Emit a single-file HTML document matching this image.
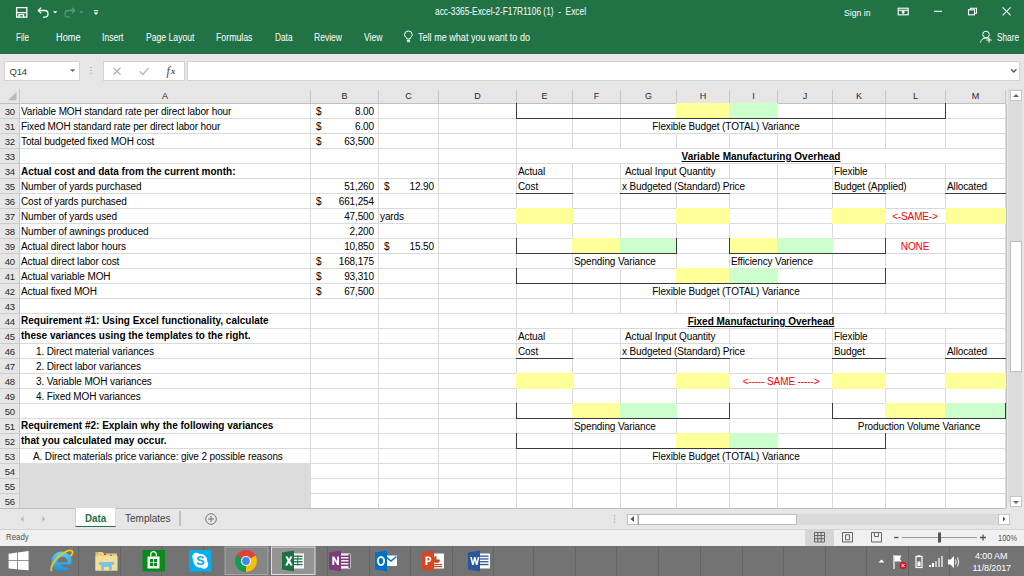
<!DOCTYPE html><html><head><meta charset="utf-8"><style>
*{margin:0;padding:0;box-sizing:border-box}
html,body{width:1024px;height:576px;overflow:hidden;background:#fff;font-family:"Liberation Sans",sans-serif}
.a{position:absolute}
.t{position:absolute;white-space:pre;font-size:10px;line-height:15px;color:#000;letter-spacing:-0.12px}
.b{font-weight:bold;letter-spacing:0px}
.u{text-decoration:underline}
.r{color:#f00}
.ui{position:absolute;white-space:pre;font-size:9px;line-height:12px;color:#fff;letter-spacing:-0.1px}
svg{position:absolute;overflow:visible}
</style></head><body>
<div class="a" style="left:0;top:0;width:1024px;height:54px;background:#217346"></div>
<svg style="left:0;top:0" width="110" height="25" viewBox="0 0 110 25">
<g fill="none" stroke="#fff" stroke-width="1.3">
<path d="M16.6 7.6h10.2v9.6h-10.2z"/>
<path d="M16.6 12.6h10.2"/>
<path d="M19 17.2v-2.6h4.6v2.6"/>
<path d="M38.5 10.5h6.2a3.3 3.3 0 0 1 0 6.6h-1.6"/>
<path d="M41.2 7.6l-2.8 2.9 2.8 2.9"/>
</g>
<path d="M53 11.3h4.4l-2.2 2.2z" fill="#fff"/>
<g fill="none" stroke="#5a9a74" stroke-width="1.3">
<path d="M74.5 10.5h-6.2a3.3 3.3 0 0 0 0 6.6h1.6"/>
<path d="M71.8 7.6l2.8 2.9-2.8 2.9"/>
</g>
<path d="M79.3 11.3h4.2l-2.1 2.1z" fill="#5a9a74"/>
<rect x="94" y="10.2" width="4" height="1.1" fill="#fff"/>
<path d="M93.6 12.6h4.8l-2.4 2.4z" fill="#fff"/>
</svg>
<div class="ui" style="left:435px;top:5.5px;font-size:10px;line-height:12px;color:#fff;font-weight:normal;letter-spacing:0;transform-origin:0 0;transform:scaleX(0.8343);">acc-3365-Excel-2-F17R1106 (1)  -  Excel</div>
<div class="ui" style="left:844px;top:6.5px;font-size:9.2px;line-height:12px;color:#fff;font-weight:normal;letter-spacing:0;transform-origin:0 0;transform:scaleX(0.9433);">Sign in</div>
<svg style="left:880px;top:0" width="144" height="25" viewBox="0 0 144 25">
<g fill="none" stroke="#fff" stroke-width="1.1">
<rect x="18.2" y="8.2" width="10" height="6.6"/>
<path d="M18.2 10.3h10"/>
<path d="M23.2 14.2v-3M21.8 12.5l1.4-1.3 1.4 1.3"/>
<path d="M54 11.3h8"/>
<rect x="88.5" y="9.8" width="6" height="5"/>
<path d="M90.5 9.8v-1.6h6v5h-2"/>
<path d="M122.6 7.3l8 8M130.6 7.3l-8 8"/>
</g></svg>
<div class="ui" style="left:15.5px;top:32px;font-size:10px;line-height:12px;color:#fff;font-weight:normal;letter-spacing:0;transform-origin:0 0;transform:scaleX(0.8062);">File</div>
<div class="ui" style="left:55.5px;top:32px;font-size:10px;line-height:12px;color:#fff;font-weight:normal;letter-spacing:0;transform-origin:0 0;transform:scaleX(0.9180);">Home</div>
<div class="ui" style="left:102px;top:32px;font-size:10px;line-height:12px;color:#fff;font-weight:normal;letter-spacing:0;transform-origin:0 0;transform:scaleX(0.8595);">Insert</div>
<div class="ui" style="left:145.5px;top:32px;font-size:10px;line-height:12px;color:#fff;font-weight:normal;letter-spacing:0;transform-origin:0 0;transform:scaleX(0.8634);">Page Layout</div>
<div class="ui" style="left:216px;top:32px;font-size:10px;line-height:12px;color:#fff;font-weight:normal;letter-spacing:0;transform-origin:0 0;transform:scaleX(0.8756);">Formulas</div>
<div class="ui" style="left:274.5px;top:32px;font-size:10px;line-height:12px;color:#fff;font-weight:normal;letter-spacing:0;transform-origin:0 0;transform:scaleX(0.8284);">Data</div>
<div class="ui" style="left:314px;top:32px;font-size:10px;line-height:12px;color:#fff;font-weight:normal;letter-spacing:0;transform-origin:0 0;transform:scaleX(0.8537);">Review</div>
<div class="ui" style="left:363.5px;top:32px;font-size:10px;line-height:12px;color:#fff;font-weight:normal;letter-spacing:0;transform-origin:0 0;transform:scaleX(0.8605);">View</div>
<div class="ui" style="left:417.5px;top:32px;font-size:10px;line-height:12px;color:#fff;font-weight:normal;letter-spacing:0;transform-origin:0 0;transform:scaleX(0.9076);">Tell me what you want to do</div>
<svg style="left:400px;top:28px" width="16" height="16" viewBox="0 0 16 16">
<g fill="none" stroke="#fff" stroke-width="1">
<path d="M6.9 11c0-1.5-2.4-2.5-2.4-4.1a3.9 3.9 0 0 1 7.8 0c0 1.6-2.4 2.6-2.4 4.1z"/>
<path d="M6.8 12.4h3.4M7.1 13.7h2.8"/>
</g></svg>
<div class="ui" style="left:997px;top:32px;font-size:10px;line-height:12px;color:#fff;font-weight:normal;letter-spacing:0;transform-origin:0 0;transform:scaleX(0.8244);">Share</div>
<svg style="left:978px;top:28px" width="18" height="18" viewBox="0 0 18 18">
<g fill="none" stroke="#fff" stroke-width="1">
<circle cx="8" cy="6.5" r="3.3"/>
<path d="M2.5 14.5c0.5-2.8 2.5-4.5 5.5-4.5 1.2 0 2.2 0.3 3 0.8"/>
<path d="M11 9.3v5.4M8.3 12h5.4"/>
</g></svg>
<div class="a" style="left:0;top:54px;width:1024px;height:34px;background:#e6e6e6"></div>
<div class="a" style="left:4px;top:61px;width:76px;height:20px;background:#fff;border:1px solid #d2d2d2"></div>
<div class="ui" style="left:9.5px;top:65.5px;line-height:12px;color:#3a3a3a;font-size:9.5px;letter-spacing:-0.2px">Q14</div>
<div class="a" style="left:103px;top:61px;width:82px;height:20px;background:#fff;border:1px solid #d2d2d2"></div>
<div class="a" style="left:187px;top:61px;width:833px;height:20px;background:#fff;border:1px solid #d2d2d2"></div>
<svg style="left:1008px;top:66px" width="10" height="10" viewBox="0 0 10 10"><path d="M3.2 3.3l2.6 2.6 2.6-2.6" fill="none" stroke="#555" stroke-width="1.4"/></svg>
<svg style="left:0;top:50px" width="200" height="40" viewBox="0 0 200 40"><path d="M69.8 19.2h5.6l-2.8 2.8z" fill="#6a6a6a"/><g fill="#999"><rect x="90.6" y="17" width="1" height="1"/><rect x="90.6" y="20" width="1" height="1"/><rect x="90.6" y="23" width="1" height="1"/></g><g fill="none" stroke="#b4b4b4" stroke-width="1.3"><path d="M113.5 17.8l7 7M120.5 17.8l-7 7"/></g><path d="M139.8 21.3l3 3.2 5.8-6.5" fill="none" stroke="#c2c2c2" stroke-width="1.8"/><text x="166.5" y="24.6" font-family="Liberation Serif" font-style="italic" font-size="12" fill="#4a4a4a">f</text><text x="171" y="24.2" font-family="Liberation Serif" font-style="italic" font-weight="bold" font-size="8.5" fill="#4a4a4a">x</text></svg>
<div class="a" style="left:0;top:88px;width:1007px;height:16px;background:#e6e6e6"></div>
<div class="a" style="left:0;top:103px;width:1006px;height:1px;background:#c0c0c0"></div>
<svg style="left:0;top:88px" width="20" height="16" viewBox="0 0 20 16"><path d="M16.5 4v8.3h-8.5z" fill="#b9b9b9"/></svg>
<div class="a" style="left:19px;top:89px;width:1px;height:420px;background:#c6c6c6"></div>
<div class="a" style="left:310px;top:90px;width:1px;height:13px;background:#c6c6c6"></div>
<div class="t" style="left:20px;top:89px;width:290px;text-align:center;line-height:14px;color:#262626;font-size:9px;letter-spacing:0">A</div>
<div class="a" style="left:378px;top:90px;width:1px;height:13px;background:#c6c6c6"></div>
<div class="t" style="left:311px;top:89px;width:67px;text-align:center;line-height:14px;color:#262626;font-size:9px;letter-spacing:0">B</div>
<div class="a" style="left:438px;top:90px;width:1px;height:13px;background:#c6c6c6"></div>
<div class="t" style="left:379px;top:89px;width:59px;text-align:center;line-height:14px;color:#262626;font-size:9px;letter-spacing:0">C</div>
<div class="a" style="left:516px;top:90px;width:1px;height:13px;background:#c6c6c6"></div>
<div class="t" style="left:439px;top:89px;width:77px;text-align:center;line-height:14px;color:#262626;font-size:9px;letter-spacing:0">D</div>
<div class="a" style="left:572px;top:90px;width:1px;height:13px;background:#c6c6c6"></div>
<div class="t" style="left:517px;top:89px;width:55px;text-align:center;line-height:14px;color:#262626;font-size:9px;letter-spacing:0">E</div>
<div class="a" style="left:620px;top:90px;width:1px;height:13px;background:#c6c6c6"></div>
<div class="t" style="left:573px;top:89px;width:47px;text-align:center;line-height:14px;color:#262626;font-size:9px;letter-spacing:0">F</div>
<div class="a" style="left:676px;top:90px;width:1px;height:13px;background:#c6c6c6"></div>
<div class="t" style="left:621px;top:89px;width:55px;text-align:center;line-height:14px;color:#262626;font-size:9px;letter-spacing:0">G</div>
<div class="a" style="left:729px;top:90px;width:1px;height:13px;background:#c6c6c6"></div>
<div class="t" style="left:677px;top:89px;width:52px;text-align:center;line-height:14px;color:#262626;font-size:9px;letter-spacing:0">H</div>
<div class="a" style="left:777px;top:90px;width:1px;height:13px;background:#c6c6c6"></div>
<div class="t" style="left:730px;top:89px;width:47px;text-align:center;line-height:14px;color:#262626;font-size:9px;letter-spacing:0">I</div>
<div class="a" style="left:832px;top:90px;width:1px;height:13px;background:#c6c6c6"></div>
<div class="t" style="left:778px;top:89px;width:54px;text-align:center;line-height:14px;color:#262626;font-size:9px;letter-spacing:0">J</div>
<div class="a" style="left:885px;top:90px;width:1px;height:13px;background:#c6c6c6"></div>
<div class="t" style="left:833px;top:89px;width:52px;text-align:center;line-height:14px;color:#262626;font-size:9px;letter-spacing:0">K</div>
<div class="a" style="left:945px;top:90px;width:1px;height:13px;background:#c6c6c6"></div>
<div class="t" style="left:886px;top:89px;width:59px;text-align:center;line-height:14px;color:#262626;font-size:9px;letter-spacing:0">L</div>
<div class="a" style="left:1005px;top:90px;width:1px;height:13px;background:#c6c6c6"></div>
<div class="t" style="left:946px;top:89px;width:59px;text-align:center;line-height:14px;color:#262626;font-size:9px;letter-spacing:0">M</div>
<div class="a" style="left:0;top:104px;width:19px;height:404px;background:#e6e6e6"></div>
<div class="a" style="left:0;top:118px;width:19px;height:1px;background:#cdcdcd"></div>
<div class="t" style="right:1009px;top:104px;line-height:15px;color:#262626;font-size:9.5px">30</div>
<div class="a" style="left:0;top:133px;width:19px;height:1px;background:#cdcdcd"></div>
<div class="t" style="right:1009px;top:119px;line-height:15px;color:#262626;font-size:9.5px">31</div>
<div class="a" style="left:0;top:148px;width:19px;height:1px;background:#cdcdcd"></div>
<div class="t" style="right:1009px;top:134px;line-height:15px;color:#262626;font-size:9.5px">32</div>
<div class="a" style="left:0;top:163px;width:19px;height:1px;background:#cdcdcd"></div>
<div class="t" style="right:1009px;top:149px;line-height:15px;color:#262626;font-size:9.5px">33</div>
<div class="a" style="left:0;top:178px;width:19px;height:1px;background:#cdcdcd"></div>
<div class="t" style="right:1009px;top:164px;line-height:15px;color:#262626;font-size:9.5px">34</div>
<div class="a" style="left:0;top:193px;width:19px;height:1px;background:#cdcdcd"></div>
<div class="t" style="right:1009px;top:179px;line-height:15px;color:#262626;font-size:9.5px">35</div>
<div class="a" style="left:0;top:208px;width:19px;height:1px;background:#cdcdcd"></div>
<div class="t" style="right:1009px;top:194px;line-height:15px;color:#262626;font-size:9.5px">36</div>
<div class="a" style="left:0;top:223px;width:19px;height:1px;background:#cdcdcd"></div>
<div class="t" style="right:1009px;top:209px;line-height:15px;color:#262626;font-size:9.5px">37</div>
<div class="a" style="left:0;top:238px;width:19px;height:1px;background:#cdcdcd"></div>
<div class="t" style="right:1009px;top:224px;line-height:15px;color:#262626;font-size:9.5px">38</div>
<div class="a" style="left:0;top:253px;width:19px;height:1px;background:#cdcdcd"></div>
<div class="t" style="right:1009px;top:239px;line-height:15px;color:#262626;font-size:9.5px">39</div>
<div class="a" style="left:0;top:268px;width:19px;height:1px;background:#cdcdcd"></div>
<div class="t" style="right:1009px;top:254px;line-height:15px;color:#262626;font-size:9.5px">40</div>
<div class="a" style="left:0;top:283px;width:19px;height:1px;background:#cdcdcd"></div>
<div class="t" style="right:1009px;top:269px;line-height:15px;color:#262626;font-size:9.5px">41</div>
<div class="a" style="left:0;top:298px;width:19px;height:1px;background:#cdcdcd"></div>
<div class="t" style="right:1009px;top:284px;line-height:15px;color:#262626;font-size:9.5px">42</div>
<div class="a" style="left:0;top:313px;width:19px;height:1px;background:#cdcdcd"></div>
<div class="t" style="right:1009px;top:299px;line-height:15px;color:#262626;font-size:9.5px">43</div>
<div class="a" style="left:0;top:328px;width:19px;height:1px;background:#cdcdcd"></div>
<div class="t" style="right:1009px;top:314px;line-height:15px;color:#262626;font-size:9.5px">44</div>
<div class="a" style="left:0;top:343px;width:19px;height:1px;background:#cdcdcd"></div>
<div class="t" style="right:1009px;top:329px;line-height:15px;color:#262626;font-size:9.5px">45</div>
<div class="a" style="left:0;top:358px;width:19px;height:1px;background:#cdcdcd"></div>
<div class="t" style="right:1009px;top:344px;line-height:15px;color:#262626;font-size:9.5px">46</div>
<div class="a" style="left:0;top:373px;width:19px;height:1px;background:#cdcdcd"></div>
<div class="t" style="right:1009px;top:359px;line-height:15px;color:#262626;font-size:9.5px">47</div>
<div class="a" style="left:0;top:388px;width:19px;height:1px;background:#cdcdcd"></div>
<div class="t" style="right:1009px;top:374px;line-height:15px;color:#262626;font-size:9.5px">48</div>
<div class="a" style="left:0;top:403px;width:19px;height:1px;background:#cdcdcd"></div>
<div class="t" style="right:1009px;top:389px;line-height:15px;color:#262626;font-size:9.5px">49</div>
<div class="a" style="left:0;top:418px;width:19px;height:1px;background:#cdcdcd"></div>
<div class="t" style="right:1009px;top:404px;line-height:15px;color:#262626;font-size:9.5px">50</div>
<div class="a" style="left:0;top:433px;width:19px;height:1px;background:#cdcdcd"></div>
<div class="t" style="right:1009px;top:419px;line-height:15px;color:#262626;font-size:9.5px">51</div>
<div class="a" style="left:0;top:448px;width:19px;height:1px;background:#cdcdcd"></div>
<div class="t" style="right:1009px;top:434px;line-height:15px;color:#262626;font-size:9.5px">52</div>
<div class="a" style="left:0;top:463px;width:19px;height:1px;background:#cdcdcd"></div>
<div class="t" style="right:1009px;top:449px;line-height:15px;color:#262626;font-size:9.5px">53</div>
<div class="a" style="left:0;top:478px;width:19px;height:1px;background:#cdcdcd"></div>
<div class="t" style="right:1009px;top:464px;line-height:15px;color:#262626;font-size:9.5px">54</div>
<div class="a" style="left:0;top:493px;width:19px;height:1px;background:#cdcdcd"></div>
<div class="t" style="right:1009px;top:479px;line-height:15px;color:#262626;font-size:9.5px">55</div>
<div class="a" style="left:0;top:508px;width:19px;height:1px;background:#cdcdcd"></div>
<div class="t" style="right:1009px;top:494px;line-height:15px;color:#262626;font-size:9.5px">56</div>
<div class="a" style="left:20px;top:104px;width:986px;height:404px;background:#fff"></div>
<div class="a" style="left:20px;top:118px;width:986px;height:1px;background:#dadada"></div>
<div class="a" style="left:20px;top:133px;width:986px;height:1px;background:#dadada"></div>
<div class="a" style="left:20px;top:148px;width:986px;height:1px;background:#dadada"></div>
<div class="a" style="left:20px;top:163px;width:986px;height:1px;background:#dadada"></div>
<div class="a" style="left:20px;top:178px;width:986px;height:1px;background:#dadada"></div>
<div class="a" style="left:20px;top:193px;width:986px;height:1px;background:#dadada"></div>
<div class="a" style="left:20px;top:208px;width:986px;height:1px;background:#dadada"></div>
<div class="a" style="left:20px;top:223px;width:986px;height:1px;background:#dadada"></div>
<div class="a" style="left:20px;top:238px;width:986px;height:1px;background:#dadada"></div>
<div class="a" style="left:20px;top:253px;width:986px;height:1px;background:#dadada"></div>
<div class="a" style="left:20px;top:268px;width:986px;height:1px;background:#dadada"></div>
<div class="a" style="left:20px;top:283px;width:986px;height:1px;background:#dadada"></div>
<div class="a" style="left:20px;top:298px;width:986px;height:1px;background:#dadada"></div>
<div class="a" style="left:20px;top:313px;width:986px;height:1px;background:#dadada"></div>
<div class="a" style="left:20px;top:328px;width:986px;height:1px;background:#dadada"></div>
<div class="a" style="left:20px;top:343px;width:986px;height:1px;background:#dadada"></div>
<div class="a" style="left:20px;top:358px;width:986px;height:1px;background:#dadada"></div>
<div class="a" style="left:20px;top:373px;width:986px;height:1px;background:#dadada"></div>
<div class="a" style="left:20px;top:388px;width:986px;height:1px;background:#dadada"></div>
<div class="a" style="left:20px;top:403px;width:986px;height:1px;background:#dadada"></div>
<div class="a" style="left:20px;top:418px;width:986px;height:1px;background:#dadada"></div>
<div class="a" style="left:20px;top:433px;width:986px;height:1px;background:#dadada"></div>
<div class="a" style="left:20px;top:448px;width:986px;height:1px;background:#dadada"></div>
<div class="a" style="left:20px;top:463px;width:986px;height:1px;background:#dadada"></div>
<div class="a" style="left:20px;top:478px;width:986px;height:1px;background:#dadada"></div>
<div class="a" style="left:20px;top:493px;width:986px;height:1px;background:#dadada"></div>
<div class="a" style="left:20px;top:508px;width:986px;height:1px;background:#dadada"></div>
<div class="a" style="left:310px;top:104px;width:1px;height:404px;background:#dadada"></div>
<div class="a" style="left:378px;top:104px;width:1px;height:404px;background:#dadada"></div>
<div class="a" style="left:438px;top:104px;width:1px;height:404px;background:#dadada"></div>
<div class="a" style="left:516px;top:104px;width:1px;height:404px;background:#dadada"></div>
<div class="a" style="left:572px;top:104px;width:1px;height:44px;background:#dadada"></div>
<div class="a" style="left:572px;top:163px;width:1px;height:150px;background:#dadada"></div>
<div class="a" style="left:572px;top:328px;width:1px;height:180px;background:#dadada"></div>
<div class="a" style="left:620px;top:104px;width:1px;height:44px;background:#dadada"></div>
<div class="a" style="left:620px;top:163px;width:1px;height:90px;background:#dadada"></div>
<div class="a" style="left:620px;top:268px;width:1px;height:45px;background:#dadada"></div>
<div class="a" style="left:620px;top:328px;width:1px;height:90px;background:#dadada"></div>
<div class="a" style="left:620px;top:433px;width:1px;height:75px;background:#dadada"></div>
<div class="a" style="left:676px;top:104px;width:1px;height:14px;background:#dadada"></div>
<div class="a" style="left:676px;top:133px;width:1px;height:15px;background:#dadada"></div>
<div class="a" style="left:676px;top:193px;width:1px;height:90px;background:#dadada"></div>
<div class="a" style="left:676px;top:298px;width:1px;height:15px;background:#dadada"></div>
<div class="a" style="left:676px;top:358px;width:1px;height:90px;background:#dadada"></div>
<div class="a" style="left:676px;top:463px;width:1px;height:45px;background:#dadada"></div>
<div class="a" style="left:729px;top:104px;width:1px;height:14px;background:#dadada"></div>
<div class="a" style="left:729px;top:133px;width:1px;height:15px;background:#dadada"></div>
<div class="a" style="left:729px;top:163px;width:1px;height:15px;background:#dadada"></div>
<div class="a" style="left:729px;top:193px;width:1px;height:90px;background:#dadada"></div>
<div class="a" style="left:729px;top:298px;width:1px;height:15px;background:#dadada"></div>
<div class="a" style="left:729px;top:328px;width:1px;height:15px;background:#dadada"></div>
<div class="a" style="left:729px;top:358px;width:1px;height:90px;background:#dadada"></div>
<div class="a" style="left:729px;top:463px;width:1px;height:45px;background:#dadada"></div>
<div class="a" style="left:777px;top:104px;width:1px;height:14px;background:#dadada"></div>
<div class="a" style="left:777px;top:133px;width:1px;height:15px;background:#dadada"></div>
<div class="a" style="left:777px;top:163px;width:1px;height:90px;background:#dadada"></div>
<div class="a" style="left:777px;top:268px;width:1px;height:15px;background:#dadada"></div>
<div class="a" style="left:777px;top:298px;width:1px;height:15px;background:#dadada"></div>
<div class="a" style="left:777px;top:328px;width:1px;height:45px;background:#dadada"></div>
<div class="a" style="left:777px;top:388px;width:1px;height:60px;background:#dadada"></div>
<div class="a" style="left:777px;top:463px;width:1px;height:45px;background:#dadada"></div>
<div class="a" style="left:832px;top:104px;width:1px;height:44px;background:#dadada"></div>
<div class="a" style="left:832px;top:163px;width:1px;height:150px;background:#dadada"></div>
<div class="a" style="left:832px;top:328px;width:1px;height:180px;background:#dadada"></div>
<div class="a" style="left:885px;top:104px;width:1px;height:44px;background:#dadada"></div>
<div class="a" style="left:885px;top:163px;width:1px;height:15px;background:#dadada"></div>
<div class="a" style="left:885px;top:193px;width:1px;height:120px;background:#dadada"></div>
<div class="a" style="left:885px;top:328px;width:1px;height:90px;background:#dadada"></div>
<div class="a" style="left:885px;top:433px;width:1px;height:75px;background:#dadada"></div>
<div class="a" style="left:945px;top:104px;width:1px;height:44px;background:#dadada"></div>
<div class="a" style="left:945px;top:163px;width:1px;height:150px;background:#dadada"></div>
<div class="a" style="left:945px;top:328px;width:1px;height:90px;background:#dadada"></div>
<div class="a" style="left:945px;top:433px;width:1px;height:75px;background:#dadada"></div>
<div class="a" style="left:1005px;top:104px;width:1px;height:404px;background:#dadada"></div>
<div class="a" style="left:20px;top:463px;width:290px;height:45px;background:#dcdcdc"></div>
<div class="a" style="left:676px;top:103px;width:54px;height:16px;background:#ffff99"></div>
<div class="a" style="left:729px;top:103px;width:49px;height:16px;background:#ccffcc"></div>
<div class="a" style="left:516px;top:208px;width:57px;height:16px;background:#ffff99"></div>
<div class="a" style="left:676px;top:208px;width:54px;height:16px;background:#ffff99"></div>
<div class="a" style="left:832px;top:208px;width:54px;height:16px;background:#ffff99"></div>
<div class="a" style="left:945px;top:208px;width:61px;height:16px;background:#ffff99"></div>
<div class="a" style="left:572px;top:238px;width:49px;height:16px;background:#ffff99"></div>
<div class="a" style="left:620px;top:238px;width:57px;height:16px;background:#ccffcc"></div>
<div class="a" style="left:729px;top:238px;width:49px;height:16px;background:#ffff99"></div>
<div class="a" style="left:777px;top:238px;width:56px;height:16px;background:#ccffcc"></div>
<div class="a" style="left:676px;top:268px;width:54px;height:16px;background:#ffff99"></div>
<div class="a" style="left:729px;top:268px;width:49px;height:16px;background:#ccffcc"></div>
<div class="a" style="left:516px;top:373px;width:57px;height:16px;background:#ffff99"></div>
<div class="a" style="left:676px;top:373px;width:54px;height:16px;background:#ffff99"></div>
<div class="a" style="left:832px;top:373px;width:54px;height:16px;background:#ffff99"></div>
<div class="a" style="left:945px;top:373px;width:61px;height:16px;background:#ffff99"></div>
<div class="a" style="left:572px;top:403px;width:49px;height:16px;background:#ffff99"></div>
<div class="a" style="left:620px;top:403px;width:57px;height:16px;background:#ccffcc"></div>
<div class="a" style="left:885px;top:403px;width:61px;height:16px;background:#ffff99"></div>
<div class="a" style="left:945px;top:403px;width:61px;height:16px;background:#ccffcc"></div>
<div class="a" style="left:676px;top:433px;width:54px;height:16px;background:#ffff99"></div>
<div class="a" style="left:729px;top:433px;width:49px;height:16px;background:#ccffcc"></div>
<div class="a" style="left:516px;top:103px;width:1px;height:16px;background:#3a3a3a"></div>
<div class="a" style="left:516px;top:118px;width:430px;height:1px;background:#3a3a3a"></div>
<div class="a" style="left:945px;top:103px;width:1px;height:16px;background:#3a3a3a"></div>
<div class="a" style="left:516px;top:193px;width:57px;height:1px;background:#3a3a3a"></div>
<div class="a" style="left:620px;top:193px;width:110px;height:1px;background:#3a3a3a"></div>
<div class="a" style="left:832px;top:193px;width:54px;height:1px;background:#3a3a3a"></div>
<div class="a" style="left:945px;top:193px;width:61px;height:1px;background:#3a3a3a"></div>
<div class="a" style="left:516px;top:238px;width:1px;height:16px;background:#3a3a3a"></div>
<div class="a" style="left:516px;top:253px;width:161px;height:1px;background:#3a3a3a"></div>
<div class="a" style="left:676px;top:238px;width:1px;height:16px;background:#3a3a3a"></div>
<div class="a" style="left:729px;top:238px;width:1px;height:16px;background:#3a3a3a"></div>
<div class="a" style="left:729px;top:253px;width:157px;height:1px;background:#3a3a3a"></div>
<div class="a" style="left:885px;top:238px;width:1px;height:16px;background:#3a3a3a"></div>
<div class="a" style="left:516px;top:268px;width:1px;height:16px;background:#3a3a3a"></div>
<div class="a" style="left:516px;top:283px;width:370px;height:1px;background:#3a3a3a"></div>
<div class="a" style="left:885px;top:268px;width:1px;height:16px;background:#3a3a3a"></div>
<div class="a" style="left:516px;top:358px;width:57px;height:1px;background:#3a3a3a"></div>
<div class="a" style="left:620px;top:358px;width:110px;height:1px;background:#3a3a3a"></div>
<div class="a" style="left:832px;top:358px;width:54px;height:1px;background:#3a3a3a"></div>
<div class="a" style="left:945px;top:358px;width:61px;height:1px;background:#3a3a3a"></div>
<div class="a" style="left:516px;top:403px;width:1px;height:16px;background:#3a3a3a"></div>
<div class="a" style="left:516px;top:418px;width:214px;height:1px;background:#3a3a3a"></div>
<div class="a" style="left:729px;top:403px;width:1px;height:16px;background:#3a3a3a"></div>
<div class="a" style="left:832px;top:403px;width:1px;height:16px;background:#3a3a3a"></div>
<div class="a" style="left:832px;top:418px;width:174px;height:1px;background:#3a3a3a"></div>
<div class="a" style="left:1005px;top:403px;width:1px;height:16px;background:#3a3a3a"></div>
<div class="a" style="left:516px;top:433px;width:1px;height:16px;background:#3a3a3a"></div>
<div class="a" style="left:516px;top:448px;width:370px;height:1px;background:#3a3a3a"></div>
<div class="a" style="left:885px;top:433px;width:1px;height:16px;background:#3a3a3a"></div>
<div class="t " style="left:21px;top:104px;">Variable MOH standard rate per direct labor hour</div>
<div class="t " style="left:21px;top:119px;">Fixed MOH standard rate per direct labor hour</div>
<div class="t " style="left:21px;top:134px;">Total budgeted fixed MOH cost</div>
<div class="t " style="left:21px;top:179px;">Number of yards purchased</div>
<div class="t " style="left:21px;top:194px;">Cost of yards purchased</div>
<div class="t " style="left:21px;top:209px;">Number of yards used</div>
<div class="t " style="left:21px;top:224px;">Number of awnings produced</div>
<div class="t " style="left:21px;top:239px;">Actual direct labor hours</div>
<div class="t " style="left:21px;top:254px;">Actual direct labor cost</div>
<div class="t " style="left:21px;top:269px;">Actual variable MOH</div>
<div class="t " style="left:21px;top:284px;">Actual fixed MOH</div>
<div class="t b" style="left:21px;top:164px;">Actual cost and data from the current month:</div>
<div class="t b" style="left:21px;top:314px;margin-top:-1px">Requirement #1: Using Excel functionality, calculate</div>
<div class="t b" style="left:21px;top:329px;margin-top:-1px">these variances using the templates to the right.</div>
<div class="t " style="left:36px;top:344px;">1. Direct material variances</div>
<div class="t " style="left:36px;top:359px;">2. Direct labor variances</div>
<div class="t " style="left:36px;top:374px;">3. Variable MOH variances</div>
<div class="t " style="left:36px;top:389px;">4. Fixed MOH variances</div>
<div class="t b" style="left:21px;top:419px;margin-top:-1px">Requirement #2: Explain why the following variances</div>
<div class="t b" style="left:21px;top:434px;margin-top:-1px">that you calculated may occur.</div>
<div class="t " style="left:33px;top:449px;">A. Direct materials price variance: give 2 possible reasons</div>
<div class="t " style="left:316px;top:104px;">$</div>
<div class="t " style="right:650px;top:104px;">8.00</div>
<div class="t " style="left:316px;top:119px;">$</div>
<div class="t " style="right:650px;top:119px;">6.00</div>
<div class="t " style="left:316px;top:134px;">$</div>
<div class="t " style="right:650px;top:134px;">63,500</div>
<div class="t " style="right:650px;top:179px;">51,260</div>
<div class="t " style="left:316px;top:194px;">$</div>
<div class="t " style="right:650px;top:194px;">661,254</div>
<div class="t " style="right:650px;top:209px;">47,500</div>
<div class="t " style="right:650px;top:224px;">2,200</div>
<div class="t " style="right:650px;top:239px;">10,850</div>
<div class="t " style="left:316px;top:254px;">$</div>
<div class="t " style="right:650px;top:254px;">168,175</div>
<div class="t " style="left:316px;top:269px;">$</div>
<div class="t " style="right:650px;top:269px;">93,310</div>
<div class="t " style="left:316px;top:284px;">$</div>
<div class="t " style="right:650px;top:284px;">67,500</div>
<div class="t " style="left:384px;top:179px;">$</div>
<div class="t " style="right:590px;top:179px;">12.90</div>
<div class="t " style="left:384px;top:239px;">$</div>
<div class="t " style="right:590px;top:239px;">15.50</div>
<div class="t " style="left:380px;top:209px;">yards</div>
<div class="t " style="left:526px;width:400px;text-align:center;top:119px;">Flexible Budget (TOTAL) Variance</div>
<div class="t b u" style="left:561px;width:400px;text-align:center;top:149px;">Variable Manufacturing Overhead</div>
<div class="t " style="left:518px;top:164px;">Actual</div>
<div class="t " style="left:625px;top:164px;">Actual Input Quantity</div>
<div class="t " style="left:834px;top:164px;">Flexible</div>
<div class="t " style="left:518px;top:179px;">Cost</div>
<div class="t " style="left:622px;top:179px;">x Budgeted (Standard) Price</div>
<div class="t " style="left:834px;top:179px;">Budget (Applied)</div>
<div class="t " style="left:947px;top:179px;">Allocated</div>
<div class="t r" style="left:715px;width:400px;text-align:center;top:209px;">&lt;-SAME-&gt;</div>
<div class="t r" style="left:715px;width:400px;text-align:center;top:239px;">NONE</div>
<div class="t " style="left:574px;top:254px;">Spending Variance</div>
<div class="t " style="left:731px;top:254px;">Efficiency Varience</div>
<div class="t " style="left:526px;width:400px;text-align:center;top:284px;">Flexible Budget (TOTAL) Variance</div>
<div class="t b u" style="left:561px;width:400px;text-align:center;top:314px;">Fixed Manufacturing Overhead</div>
<div class="t " style="left:518px;top:329px;">Actual</div>
<div class="t " style="left:625px;top:329px;">Actual Input Quantity</div>
<div class="t " style="left:834px;top:329px;">Flexible</div>
<div class="t " style="left:518px;top:344px;">Cost</div>
<div class="t " style="left:622px;top:344px;">x Budgeted (Standard) Price</div>
<div class="t " style="left:834px;top:344px;">Budget</div>
<div class="t " style="left:947px;top:344px;">Allocated</div>
<div class="t r" style="left:581px;width:400px;text-align:center;top:374px;">&lt;----- SAME -----&gt;</div>
<div class="t " style="left:574px;top:419px;">Spending Variance</div>
<div class="t " style="left:719px;width:400px;text-align:center;top:419px;">Production Volume Variance</div>
<div class="t " style="left:526px;width:400px;text-align:center;top:449px;">Flexible Budget (TOTAL) Variance</div>
<div class="a" style="left:1006px;top:88px;width:18px;height:420px;background:#e6e6e6"></div>
<div class="a" style="left:1006px;top:104px;width:1px;height:404px;background:#c6c6c6"></div>
<div class="a" style="left:1008px;top:89px;width:14px;height:413px;background:#dcdcdc"></div>
<div class="a" style="left:1010px;top:90px;width:12px;height:11px;background:#fff;border:1px solid #c6c6c6"></div>
<svg style="left:1008px;top:88px" width="16" height="16" viewBox="0 0 16 16"><path d="M5 9h6l-3-3z" fill="#666"/></svg>
<div class="a" style="left:1010px;top:241px;width:12px;height:131px;background:#fff;border:1px solid #bdbdbd"></div>
<div class="a" style="left:1010px;top:496px;width:12px;height:11px;background:#fff;border:1px solid #c6c6c6"></div>
<svg style="left:1008px;top:494px" width="16" height="16" viewBox="0 0 16 16"><path d="M5 7h6l-3 3z" fill="#666"/></svg>
<div class="a" style="left:0;top:508px;width:1024px;height:22px;background:#e6e6e6"></div>
<div class="a" style="left:0;top:508px;width:1006px;height:1px;background:#bdbdbd"></div>
<svg style="left:0;top:508px" width="1024" height="22" viewBox="0 0 1024 22"><path d="M23.5 8l-2.5 3 2.5 3z" fill="#b5b5b5"/><path d="M42.5 8l2.5 3-2.5 3z" fill="#b5b5b5"/><rect x="179.5" y="3" width="1" height="15" fill="#9a9a9a"/><circle cx="211" cy="11" r="5.3" fill="none" stroke="#777" stroke-width="1"/><path d="M211 8v6M208 11h6" stroke="#777" stroke-width="1.1"/><g fill="#a0a0a0"><rect x="614" y="7.3" width="1.2" height="1.2"/><rect x="614" y="10.3" width="1.2" height="1.2"/><rect x="614" y="13.4" width="1.2" height="1.2"/></g></svg>
<div class="a" style="left:75px;top:508px;width:41px;height:19px;background:#fff;border-bottom:1.5px solid #217346;border-left:1px solid #cfcfcf;border-right:1px solid #dcdcdc"></div>
<div class="ui" style="left:84.5px;top:513px;font-size:10px;line-height:12px;color:#217346;font-weight:bold;letter-spacing:0;transform-origin:0 0;transform:scaleX(0.9798);">Data</div>
<div class="ui" style="left:125px;top:513px;color:#444;font-size:10px;letter-spacing:0px">Templates</div>
<div class="a" style="left:627px;top:514px;width:383px;height:11px;background:#dadada"></div>
<div class="a" style="left:627px;top:514px;width:170px;height:11px;background:#fff;border:1px solid #bdbdbd"></div>
<div class="a" style="left:998px;top:514px;width:12px;height:11px;background:#fff;border:1px solid #c6c6c6"></div>
<svg style="left:620px;top:508px" width="400" height="22" viewBox="0 0 400 22"><path d="M14 8v6l-3.6-3z" fill="#555"/><rect x="17.5" y="6" width="1.6" height="11" fill="#a6a6a6"/><path d="M383 8.5v5l2.5-2.5z" fill="#555"/></svg>
<div class="a" style="left:0;top:530px;width:1024px;height:16px;background:#f0f0f0"></div>
<div class="a" style="left:0;top:529px;width:1024px;height:1px;background:#d4d4d4"></div>
<div class="ui" style="left:6.4px;top:531px;font-size:9px;line-height:12px;color:#505050;font-weight:normal;letter-spacing:0;transform-origin:0 0;transform:scaleX(0.8764);">Ready</div>
<div class="a" style="left:805px;top:530px;width:29px;height:16px;background:#d6d6d6"></div>
<svg style="left:800px;top:530px" width="224" height="16" viewBox="0 0 224 16">
<g fill="none" stroke="#666" stroke-width="1">
<path d="M14.5 2.5h10v9.5h-10zM14.5 5.5h10M14.5 8.7h10M17.8 2.5v9.5M21.2 2.5v9.5"/>
<path d="M42.5 2.5h10v9.5h-10z"/><path d="M45.5 4.8h4v5h-4z"/>
<path d="M71.5 2.5h10v9.5h-10zM74.5 2.5v4h4v-4"/>
</g>
<path d="M94 7.5h4.5" stroke="#555" stroke-width="1.3"/>
<path d="M102 7.5h75" stroke="#999" stroke-width="1"/>
<rect x="138" y="2.5" width="3" height="10" fill="#555"/>
<path d="M180 7.5h6M183 4.5v6" stroke="#555" stroke-width="1.3"/>
</svg>
<div class="ui" style="left:998.4px;top:532px;font-size:9px;line-height:12px;color:#505050;font-weight:normal;letter-spacing:0;transform-origin:0 0;transform:scaleX(0.8250);">100%</div>
<div class="a" style="left:0;top:546px;width:1024px;height:30px;background:#737373"></div>
<svg style="left:0;top:546px" width="1024" height="30" viewBox="0 0 1024 30"><rect x="78" y="0" width="1" height="30" fill="#606060" opacity="0.8"/><rect x="120" y="0" width="1" height="30" fill="#606060" opacity="0.8"/><rect x="161" y="0" width="1" height="30" fill="#606060" opacity="0.8"/><rect x="203" y="0" width="1" height="30" fill="#606060" opacity="0.8"/><rect x="327" y="0" width="1" height="30" fill="#606060" opacity="0.8"/><rect x="369" y="0" width="1" height="30" fill="#606060" opacity="0.8"/><rect x="410" y="0" width="1" height="30" fill="#606060" opacity="0.8"/><rect x="452" y="0" width="1" height="30" fill="#606060" opacity="0.8"/><rect x="493" y="0" width="1" height="30" fill="#606060" opacity="0.8"/><rect x="533" y="0" width="1" height="30" fill="#606060" opacity="0.8"/><rect x="575" y="0" width="1" height="30" fill="#606060" opacity="0.8"/><rect x="616" y="0" width="1" height="30" fill="#606060" opacity="0.8"/><rect x="658" y="0" width="1" height="30" fill="#606060" opacity="0.8"/><rect x="700" y="0" width="1" height="30" fill="#606060" opacity="0.8"/><rect x="742" y="0" width="1" height="30" fill="#606060" opacity="0.8"/><rect x="783" y="0" width="1" height="30" fill="#606060" opacity="0.8"/><rect x="825" y="0" width="1" height="30" fill="#606060" opacity="0.8"/><rect x="866" y="0" width="1" height="30" fill="#606060" opacity="0.8"/><rect x="908" y="0" width="1" height="30" fill="#606060" opacity="0.8"/><rect x="949" y="0" width="1" height="30" fill="#606060" opacity="0.8"/>
<path d="M8.6 7.8L17.1 6.6V14.3H8.6zM17.9 6.5L28.6 5V14.3H17.9zM8.6 15H17.1V23.3L8.6 22.4zM17.9 15H28.6V24.2L17.9 23.4z" fill="#fff"/>
<rect x="225" y="1" width="43" height="27.5" fill="#868686" stroke="#a8a8a8" stroke-width="1"/>
<rect x="271.5" y="1" width="43.5" height="27.5" fill="#949494" stroke="#dedede" stroke-width="1"/>
</svg>
<svg style="left:48px;top:548px" width="26" height="26" viewBox="0 0 26 26">
<defs><linearGradient id="ieg" x1="0" y1="0" x2="0" y2="1"><stop offset="0" stop-color="#5cd0f7"/><stop offset="1" stop-color="#1a8fd8"/></linearGradient></defs>
<circle cx="13.5" cy="13.5" r="10" fill="url(#ieg)"/>
<path d="M9.4 14.3a5.1 5.6 0 0 1 10.2 0z" fill="#737373"/>
<path d="M11 16.6h13v3.2h-3.5c-3 0-6.5-1-9.5-3.2z" fill="#737373"/>
<path d="M3.8 23.2C1.5 20.5 6 12 12 7.5S22.5 1.5 24.2 3.2C25.3 4.5 23.8 6.8 22.3 8.3" fill="none" stroke="#f5c21b" stroke-width="1.9"/>
</svg>
<svg style="left:94px;top:548px" width="26" height="26" viewBox="0 0 26 26">
<path d="M1.5 4h7l1.5 1.5h13v17H1.5z" fill="#e8cf7a"/>
<rect x="2.5" y="4.5" width="1.5" height="1" fill="#3bb54a"/><rect x="10" y="5.5" width="2" height="1.5" fill="#d9342b"/><rect x="16" y="6.5" width="2" height="1.5" fill="#3ba0e0"/>
<path d="M1.5 8h22v14.5h-22z" fill="#f4df98"/>
<path d="M5 14h15v3h-2.2v5h-2.8v-3h-5v3h-2.8v-5H5z" fill="#7cc3ee"/>
</svg>
<svg style="left:142px;top:550px" width="24" height="22" viewBox="0 0 24 22">
<rect x="0.5" y="0" width="22.5" height="21.5" fill="#0a8a1a"/>
<path d="M8.7 6.5v-2a2.8 2.8 0 0 1 5.6 0v2" fill="none" stroke="#fff" stroke-width="1.2"/>
<path d="M5.5 6.5h12v12h-12z" fill="#fff"/>
<g fill="#0a8a1a"><rect x="8" y="9" width="3.2" height="3.2"/><rect x="11.9" y="9" width="3.2" height="3.2"/><rect x="8" y="12.9" width="3.2" height="3.2"/><rect x="11.9" y="12.9" width="3.2" height="3.2"/></g>
</svg>
<svg style="left:189px;top:550px" width="23" height="22" viewBox="0 0 23 22">
<rect x="0" y="0" width="22.5" height="21.5" fill="#00aff0"/>
<circle cx="7.5" cy="7" r="4.2" fill="#fff"/><circle cx="15" cy="14.5" r="4.2" fill="#fff"/>
<circle cx="11.25" cy="10.75" r="7" fill="#fff"/>
<text x="11.3" y="15.3" text-anchor="middle" font-family="Liberation Sans" font-weight="bold" font-size="12.5" fill="#00aff0">S</text>
</svg>
<svg style="left:234px;top:549px" width="24" height="24" viewBox="0 0 24 24">
<circle cx="12" cy="12" r="11" fill="#db4437"/>
<path d="M12 12L21.5 6.5A11 11 0 0 1 12 23z" fill="#f4c20d"/>
<path d="M12 12L12 23A11 11 0 0 1 2.5 6.5z" fill="#0f9d58"/>
<circle cx="12" cy="12" r="5" fill="#fff"/>
<circle cx="12" cy="12" r="3.9" fill="#4285f4"/>
</svg>
<svg style="left:281px;top:549px" width="24" height="24" viewBox="0 0 24 24">
<rect x="10" y="4.5" width="13" height="15" fill="#fff"/>
<g fill="#1d7044"><rect x="12.5" y="6.5" width="9" height="1.3"/><rect x="12.5" y="9.3" width="9" height="1.3"/><rect x="12.5" y="12.1" width="9" height="1.3"/><rect x="12.5" y="14.9" width="9" height="1.3"/><rect x="16.3" y="6.5" width="1" height="10"/></g>
<path d="M1 3.5L13 1.5v21L1 20.5z" fill="#1d7044"/>
<path d="M4.3 7.5h2.3l1.3 2.6 1.3-2.6h2.3l-2.3 4.3 2.4 4.7H9.3l-1.4-2.8-1.4 2.8H4.1l2.5-4.7z" fill="#fff"/>
</svg>
<svg style="left:328px;top:549px" width="24" height="24" viewBox="0 0 24 24">
<rect x="10" y="4.5" width="12.5" height="15" fill="#fff"/>
<g fill="#80397b"><rect x="12.5" y="6.5" width="8.5" height="1.6"/><rect x="12.5" y="9.5" width="8.5" height="1.6"/><rect x="12.5" y="12.5" width="8.5" height="1.6"/><rect x="12.5" y="15.5" width="8.5" height="1.6"/><rect x="20.5" y="5" width="1.5" height="14"/></g>
<path d="M1 3.5L13 1.5v21L1 20.5z" fill="#80397b"/>
<path d="M4.3 16V7.5h1.9l3 5v-5h1.8V16H9.2l-3-5v5z" fill="#fff"/>
</svg>
<svg style="left:374px;top:549px" width="24" height="24" viewBox="0 0 24 24">
<rect x="11" y="6.5" width="12" height="10.5" fill="#fff"/>
<path d="M11.5 7.5l5.5 4.5 5.5-4.5" fill="none" stroke="#0072c6" stroke-width="1.4"/>
<path d="M1 3.5L13 1.5v21L1 20.5z" fill="#0072c6"/>
<ellipse cx="7" cy="12" rx="3.1" ry="4" fill="none" stroke="#fff" stroke-width="1.8"/>
</svg>
<svg style="left:421px;top:549px" width="24" height="24" viewBox="0 0 24 24">
<rect x="10" y="4.5" width="13" height="15" fill="#fff"/>
<path d="M15.5 7a3.5 3.5 0 1 0 3.5 3.5h-3.5z" fill="#d24726"/>
<rect x="13" y="15" width="8" height="1.2" fill="#d24726"/><rect x="13" y="17" width="8" height="1.2" fill="#d24726"/>
<path d="M1 3.5L13 1.5v21L1 20.5z" fill="#d24726"/>
<path d="M4.5 16V7.5h3a2.6 2.6 0 0 1 0 5.4H6.4V16z M6.4 9v2.5h1a1.25 1.25 0 0 0 0-2.5z" fill="#fff" fill-rule="evenodd"/>
</svg>
<svg style="left:467px;top:549px" width="24" height="24" viewBox="0 0 24 24">
<rect x="10" y="4.5" width="13" height="15" fill="#fff"/>
<g fill="#2b579a"><rect x="12.5" y="6.5" width="9" height="1.3"/><rect x="12.5" y="9.3" width="9" height="1.3"/><rect x="12.5" y="12.1" width="9" height="1.3"/><rect x="12.5" y="14.9" width="9" height="1.3"/></g>
<path d="M1 3.5L13 1.5v21L1 20.5z" fill="#2b579a"/>
<path d="M3.2 8h1.7l1 5 1.2-5h1.4l1.2 5 1-5h1.7l-1.9 8H8.9l-1.1-4.6-1.1 4.6H5.1z" fill="#fff"/>
</svg>
<svg style="left:870px;top:546px" width="100" height="30" viewBox="0 0 100 30">
<path d="M8.5 16.5l3-3 3 3z" fill="#fff"/>
<path d="M24 9v14" stroke="#fff" stroke-width="1.2"/>
<path d="M24.5 9.5h7l-1.5 3 1.5 3h-7z" fill="#fff"/>
<circle cx="33" cy="19.5" r="3.5" fill="#e81123"/><path d="M31.5 18l3 3M34.5 18l-3 3" stroke="#fff" stroke-width="1"/>
<rect x="46" y="10.5" width="6" height="11" fill="none" stroke="#fff" stroke-width="1.2"/><rect x="47.5" y="15.5" width="3" height="4.5" fill="#fff"/><rect x="47.5" y="9.3" width="3" height="1.3" fill="#fff"/>
<g fill="#fff"><rect x="59" y="19" width="2" height="2"/><rect x="62" y="17" width="2" height="4"/><rect x="65" y="15" width="2" height="6" opacity="0.6"/><rect x="68" y="12" width="2" height="9" opacity="0.6"/><rect x="71" y="10" width="2" height="11" opacity="0.6"/></g>
<path d="M78 13.5h2.5l3.5-3.5v12l-3.5-3.5H78z" fill="#fff"/>
<path d="M85.5 13.5q1.2 2.5 0 5M87.5 11.5q2.4 4.5 0 9" fill="none" stroke="#fff" stroke-width="1"/>
</svg>
<div class="ui" style="left:975px;top:550px;font-size:9px">4:00 AM</div>
<div class="ui" style="left:972.5px;top:562px;font-size:9px">11/8/2017</div>
</body></html>
